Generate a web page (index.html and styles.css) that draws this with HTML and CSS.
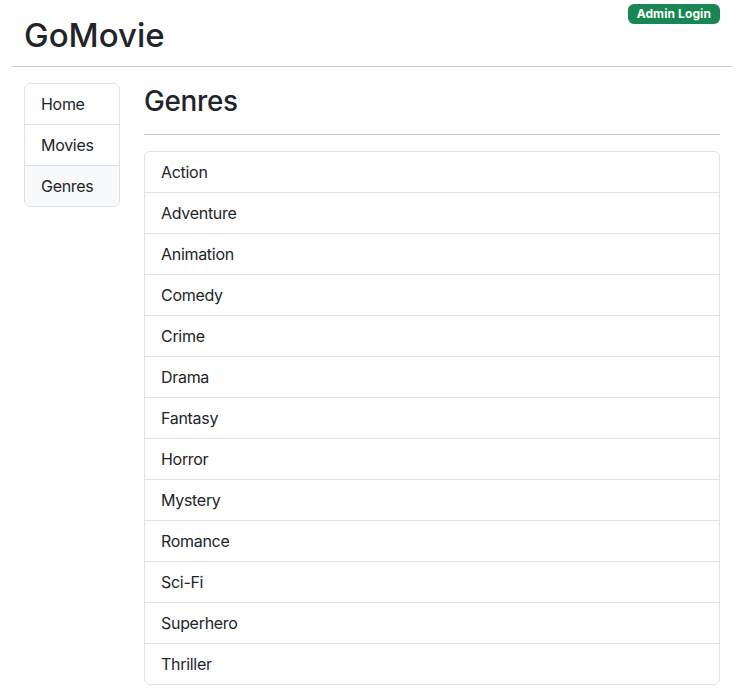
FILE: index.html
```html
<!DOCTYPE html>
<html lang="en">
<head>
<meta charset="utf-8">
<title>GoMovie</title>
<link rel="stylesheet" href="styles.css">
</head>
<body>
<div class="container">
  <header class="header">
    <h1 class="brand">GoMovie</h1>
    <a class="badge" href="#">Admin Login</a>
  </header>
  <hr class="top-rule">
  <div class="main">
    <nav class="side-list">
      <a class="side-item" href="#">Home</a>
      <a class="side-item" href="#">Movies</a>
      <a class="side-item is-current" href="#">Genres</a>
    </nav>
    <section class="content">
      <h2 class="page-title">Genres</h2>
      <hr class="title-rule">
      <ul class="genre-list">
        <li class="genre-item">Action</li>
        <li class="genre-item">Adventure</li>
        <li class="genre-item">Animation</li>
        <li class="genre-item">Comedy</li>
        <li class="genre-item">Crime</li>
        <li class="genre-item">Drama</li>
        <li class="genre-item">Fantasy</li>
        <li class="genre-item">Horror</li>
        <li class="genre-item">Mystery</li>
        <li class="genre-item">Romance</li>
        <li class="genre-item">Sci-Fi</li>
        <li class="genre-item">Superhero</li>
        <li class="genre-item">Thriller</li>
      </ul>
    </section>
  </div>
</div>
</body>
</html>
```
FILE: styles.css
```css
* { box-sizing: border-box; }

body {
  margin: 0;
  background: #fff;
  color: #212529;
  font-family: Inter, "Noto Sans", "Liberation Sans", sans-serif;
  font-size: 16px;
  line-height: 1.5;
  letter-spacing: -0.3px;
}

.container {
  width: 720px;
  margin: 0 12px;
  padding: 0 12px;
}

.header {
  display: flex;
  justify-content: space-between;
  align-items: flex-start;
}

.brand {
  margin: 16px 0 10px;
  font-size: 33px;
  font-weight: 500;
  line-height: 1.2;
  letter-spacing: 0;
}

.badge {
  display: inline-block;
  margin-top: 3.5px;
  padding: 4px 9px;
  font-size: 12px;
  font-weight: 700;
  line-height: 1;
  letter-spacing: 0.1px;
  color: #fff;
  background: #198754;
  border-radius: 6px;
  text-decoration: none;
}

.top-rule {
  margin: 0 -12px 16px;
  border: 0;
  border-top: 1px solid #c8c9ca;
}

.main {
  display: grid;
  grid-template-columns: 96px 576px;
  column-gap: 24px;
  align-items: start;
}

.side-list {
  display: flex;
  flex-direction: column;
  border: 1px solid #dee2e6;
  border-radius: 6px;
  overflow: hidden;
}

.side-item {
  display: block;
  padding: 8px 16px;
  line-height: 24px;
  color: #212529;
  text-decoration: none;
  border-top: 1px solid #dee2e6;
}

.side-item:first-child { border-top: 0; }

.side-item.is-current { background: #f8f9fa; }

.page-title {
  margin: 2px 0 0;
  font-size: 27.85px;
  font-weight: 500;
  line-height: 1.2;
}

.title-rule {
  margin: 16px 0 16px;
  border: 0;
  border-top: 1px solid #c8c9ca;
}

.genre-list {
  list-style: none;
  margin: 0;
  padding: 0;
  border: 1px solid #dee2e6;
  border-radius: 6px;
}

.genre-item {
  padding: 8px 16px;
  line-height: 24px;
  border-top: 1px solid #dee2e6;
}

.genre-item:first-child { border-top: 0; }
```
